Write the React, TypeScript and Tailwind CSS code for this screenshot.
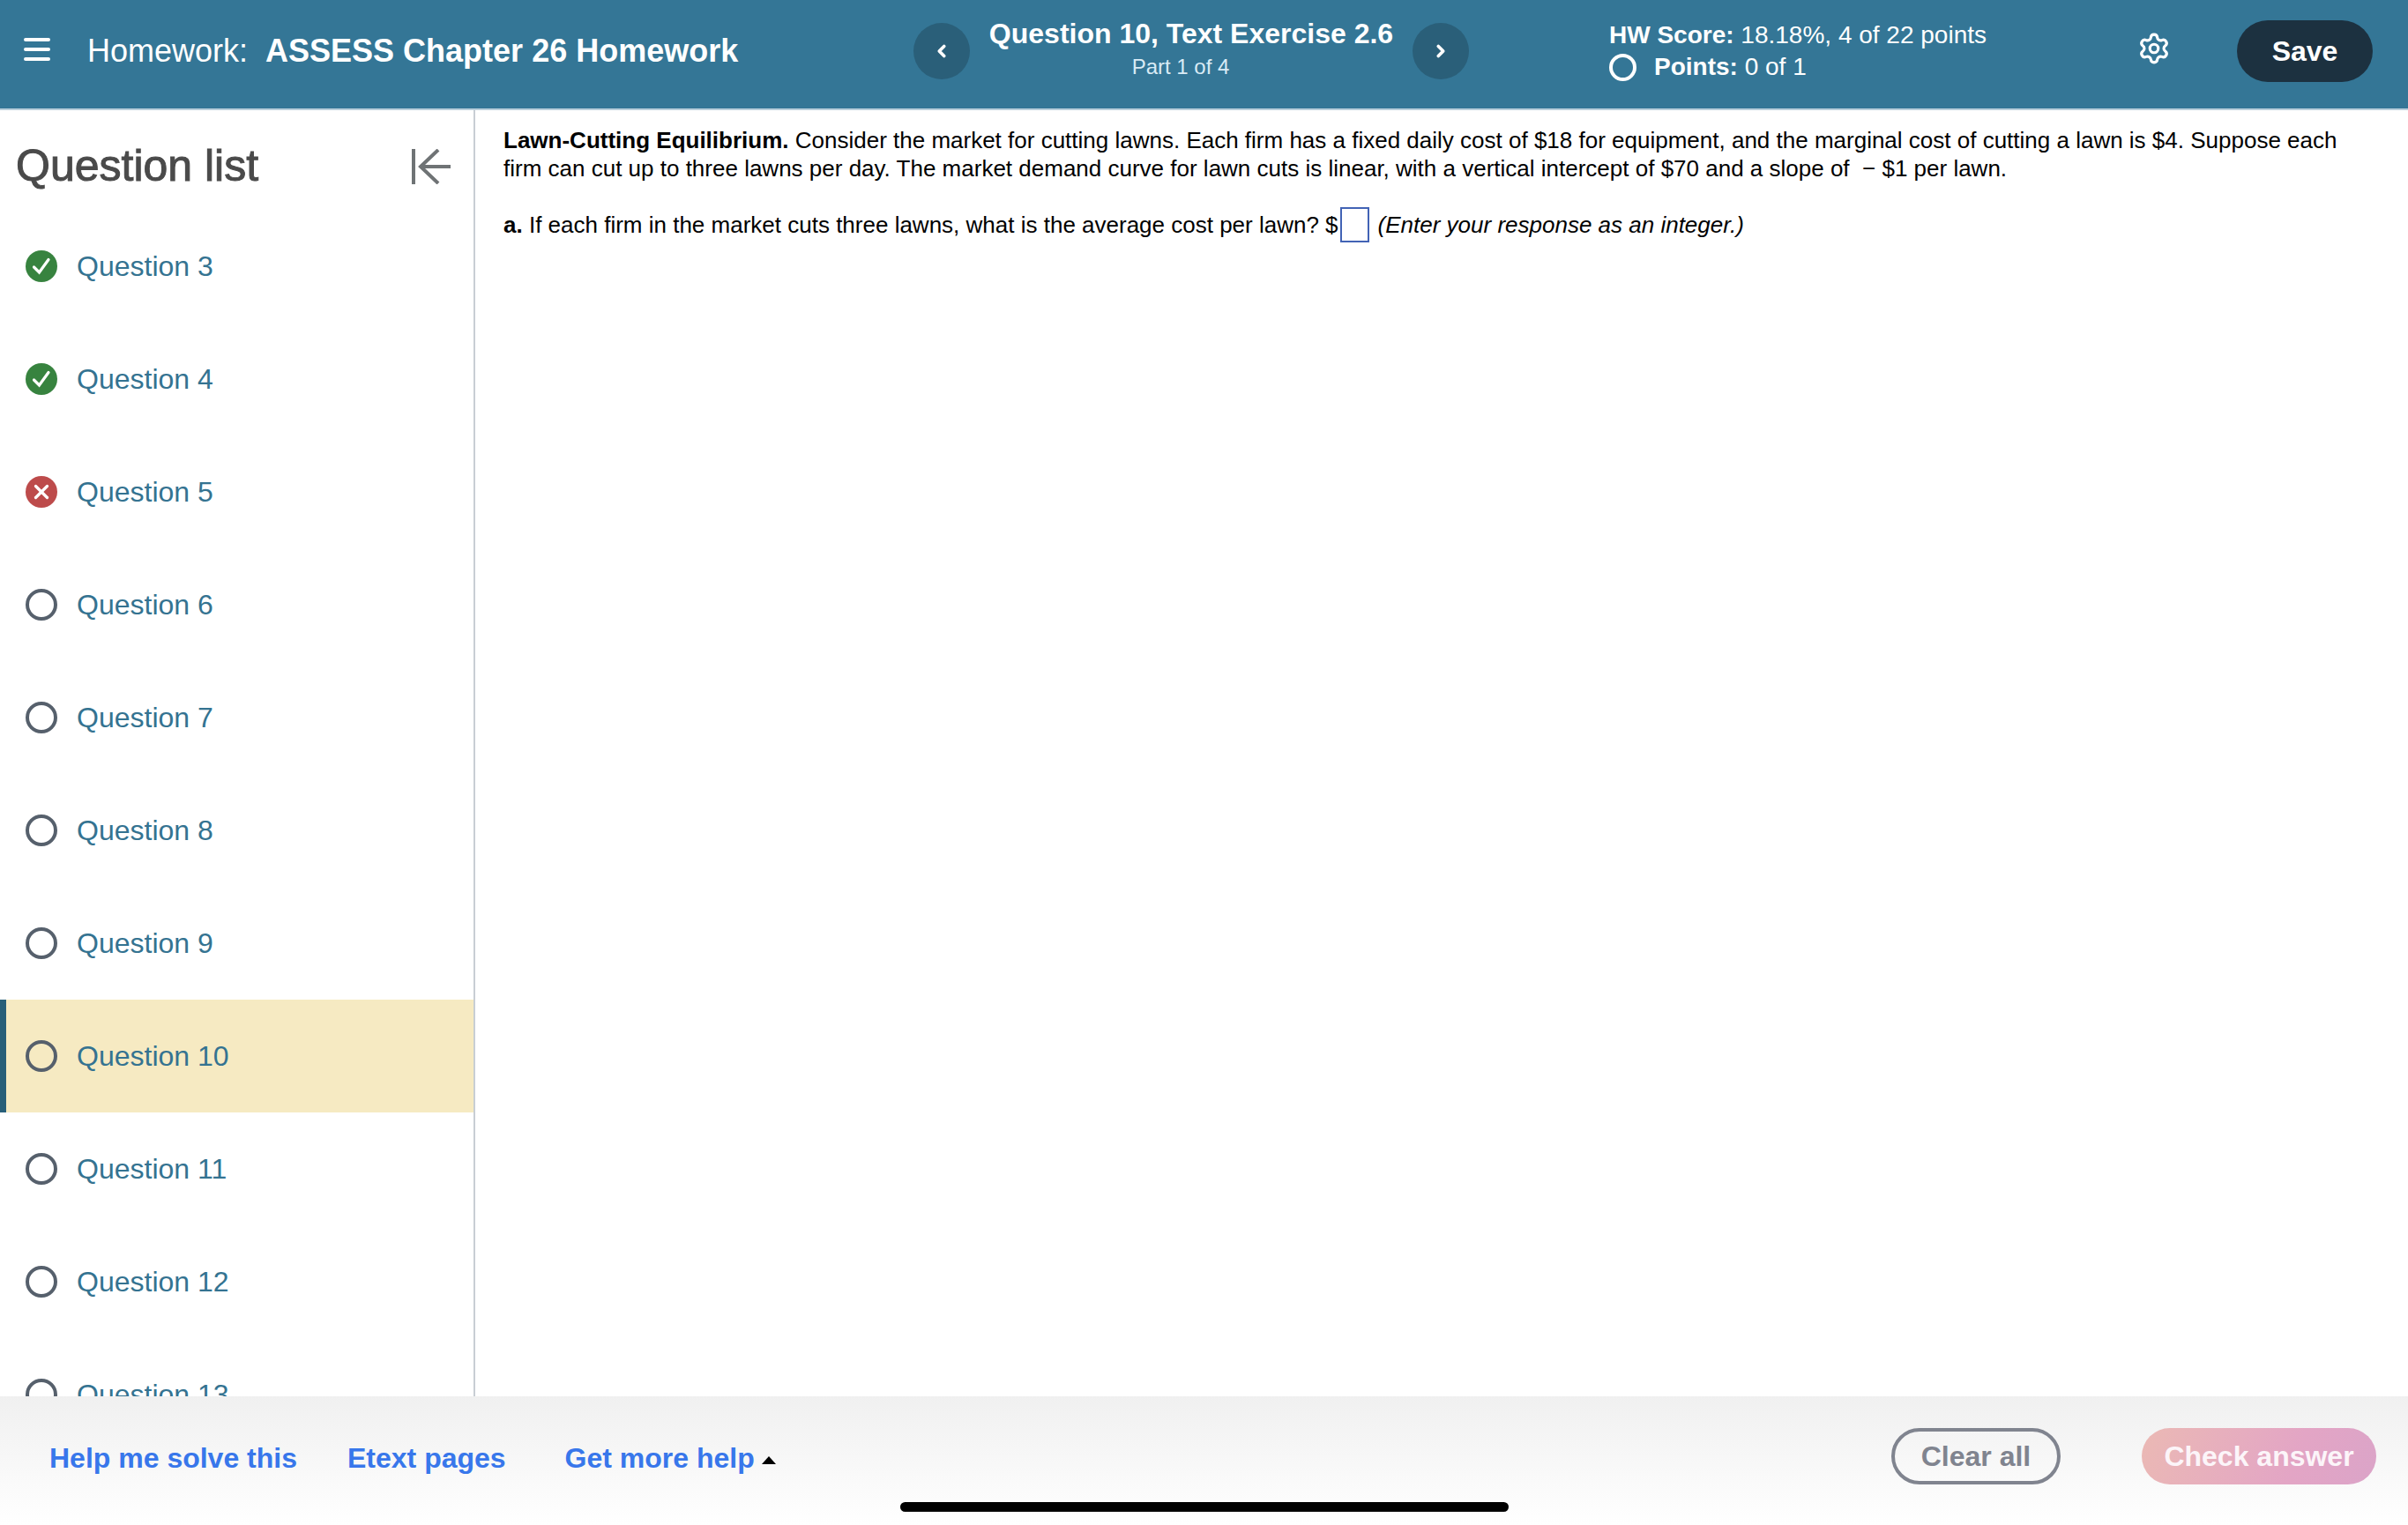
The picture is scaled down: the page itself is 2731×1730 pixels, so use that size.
import { ChevronLeft, ChevronRight, Settings, X } from "lucide-react"

type Status = "correct" | "wrong" | "open"

const questions: { number: number; status: Status }[] = [
  { number: 3, status: "correct" },
  { number: 4, status: "correct" },
  { number: 5, status: "wrong" },
  { number: 6, status: "open" },
  { number: 7, status: "open" },
  { number: 8, status: "open" },
  { number: 9, status: "open" },
  { number: 10, status: "open" },
  { number: 11, status: "open" },
  { number: 12, status: "open" },
  { number: 13, status: "open" },
]

const current = 10

function StatusIcon({ status }: { status: Status }) {
  if (status === "correct") {
    return (
      <svg width="36" height="36" viewBox="0 0 36 36" fill="none" className="shrink-0">
        <circle cx="18" cy="18" r="18" fill="#37833f" />
        <path d="M9.500 19l6 6L26 10.500" stroke="white" strokeWidth="3.200" strokeLinecap="round" />
      </svg>
    )
  }
  if (status === "wrong") {
    return (
      <span className="flex size-9 shrink-0 items-center justify-center rounded-full bg-[#bd4b4b] text-white">
        <X size={26} strokeWidth={3} />
      </span>
    )
  }
  return <span className="size-9 shrink-0 rounded-full border-4 border-[#56606c]" />
}

function Header() {
  return (
    <header className="grid h-[125px] shrink-0 grid-cols-[1036px_630px_1fr] border-b-2 border-[#b9cedb] bg-[#347696] pb-[7px] text-white">
      <div className="flex items-center pl-[27px]">
        <button aria-label="Open menu" className="pb-1">
          <svg width="32" height="32" viewBox="0 0 32 32" stroke="currentColor" strokeWidth="4" strokeLinecap="round">
            <path d="M2 5h26M2 16h26M2 27h26" />
          </svg>
        </button>
        <h1 className="ml-10 flex gap-5 text-4xl">
          Homework: <strong>ASSESS Chapter 26 Homework</strong>
        </h1>
      </div>
      <div className="flex items-center justify-between">
        <button aria-label="Previous question" className="flex size-16 items-center justify-center rounded-full bg-[#2a5f79]">
          <ChevronLeft size={22} strokeWidth={4} />
        </button>
        <div className="pb-1 text-center">
          <h2 className="text-[32px] leading-10 font-bold">Question 10, Text Exercise 2.6</h2>
          <p className="pr-6 text-2xl leading-9 text-[#d9ebf5]">Part 1 of 4</p>
        </div>
        <button aria-label="Next question" className="flex size-16 items-center justify-center rounded-full bg-[#2a5f79]">
          <ChevronRight size={22} strokeWidth={4} />
        </button>
      </div>
      <div className="flex items-center pr-10 pl-[159px]">
        <div className="text-[28px] leading-9">
          <p>
            <strong>HW Score:</strong> 18.18%, 4 of 22 points
          </p>
          <p className="flex items-center">
            <span className="mr-5 size-[31px] rounded-full border-4 border-white" />
            <span>
              <strong>Points:</strong> 0 of 1
            </span>
          </p>
        </div>
        <button aria-label="Settings" className="mr-[75px] ml-auto pb-1.5">
          <Settings size={38} strokeWidth={2} />
        </button>
        <button className="h-[70px] w-[154px] rounded-full bg-[#1c3140] text-[32px] font-bold">Save</button>
      </div>
    </header>
  )
}

function Sidebar() {
  return (
    <aside className="w-[539px] shrink-0 overflow-hidden border-r-2 border-[#c8ced4]">
      <div className="flex h-[113px] items-center justify-between pt-3.5 pr-[26px] pl-[18px]">
        <h2 className="text-[50px] text-[#4a4a4a] [-webkit-text-stroke:1px]">Question list</h2>
        <button aria-label="Collapse question list">
          <svg width="44" height="40" viewBox="0 0 44 40" fill="none" stroke="#6f7375" strokeWidth="4">
            <path d="M2 0v40M44 20H11M30 1L10 20l20 19" />
          </svg>
        </button>
      </div>
      <nav>
        {questions.map((q) => (
          <a
            key={q.number}
            href="#"
            className={
              q.number === current
                ? "flex h-32 items-center gap-[22px] border-l-7 border-[#285f79] bg-[#f6eac2] pl-[22px] text-[32px] text-[#347391]"
                : "flex h-32 items-center gap-[22px] pl-[29px] text-[32px] text-[#347391]"
            }
          >
            <StatusIcon status={q.status} />
            Question {q.number}
          </a>
        ))}
      </nav>
    </aside>
  )
}

function Exercise() {
  return (
    <main className="flex-1 pt-[18px] pr-16 pl-8 text-[26px] leading-8 text-black">
      <p>
        <strong>Lawn-Cutting Equilibrium.</strong> Consider the market for cutting lawns. Each firm has a fixed daily
        cost of $18 for equipment, and the marginal cost of cutting a lawn is $4. Suppose each firm can cut up to three
        lawns per day. The market demand curve for lawn cuts is linear, with a vertical intercept of $70 and a slope of
        &nbsp;− $1 per lawn.
      </p>
      <div className="mt-7 flex items-center">
        <label htmlFor="answer">
          <strong>a.</strong> If each firm in the market cuts three lawns, what is the average cost per lawn? $
        </label>
        <input id="answer" type="text" className="mr-2.5 ml-0.5 h-10 w-[33px] border-2 border-[#4263b5] text-center" />
        <em>(Enter your response as an integer.)</em>
      </div>
    </main>
  )
}

function Footer() {
  return (
    <footer className="h-[146px] shrink-0 bg-linear-to-b from-[#f0f0f0] to-white">
      <div className="flex h-[120px] items-center pt-4 pr-9 pl-14 text-[32px] font-bold text-[#3877eb]">
        <div className="flex items-center pt-1">
          <a href="#">Help me solve this</a>
          <a href="#" className="ml-[57px]">
            Etext pages
          </a>
          <button className="ml-[67px] flex items-center gap-2">
            Get more help
            <svg width="16" height="9" viewBox="0 0 16 9" fill="black" className="mt-1">
              <path d="M0 9L8 0l8 9z" />
            </svg>
          </button>
        </div>
        <button className="mr-[92px] ml-auto h-16 w-48 rounded-full border-4 border-[#80848f] text-[#80848f]">
          Clear all
        </button>
        <button className="h-16 w-[266px] rounded-full bg-linear-110 from-[#ebb9b4] via-[#e3a5c5] via-65% to-[#dba4c8] text-[#fcf5f9]">
          Check answer
        </button>
      </div>
      <div className="mx-auto h-[11px] w-[690px] rounded-full bg-black" />
    </footer>
  )
}

export default function App() {
  return (
    <div className="flex h-screen flex-col bg-white font-['Liberation_Sans',Arial,sans-serif]">
      <Header />
      <div className="flex min-h-0 flex-1">
        <Sidebar />
        <Exercise />
      </div>
      <Footer />
    </div>
  )
}
